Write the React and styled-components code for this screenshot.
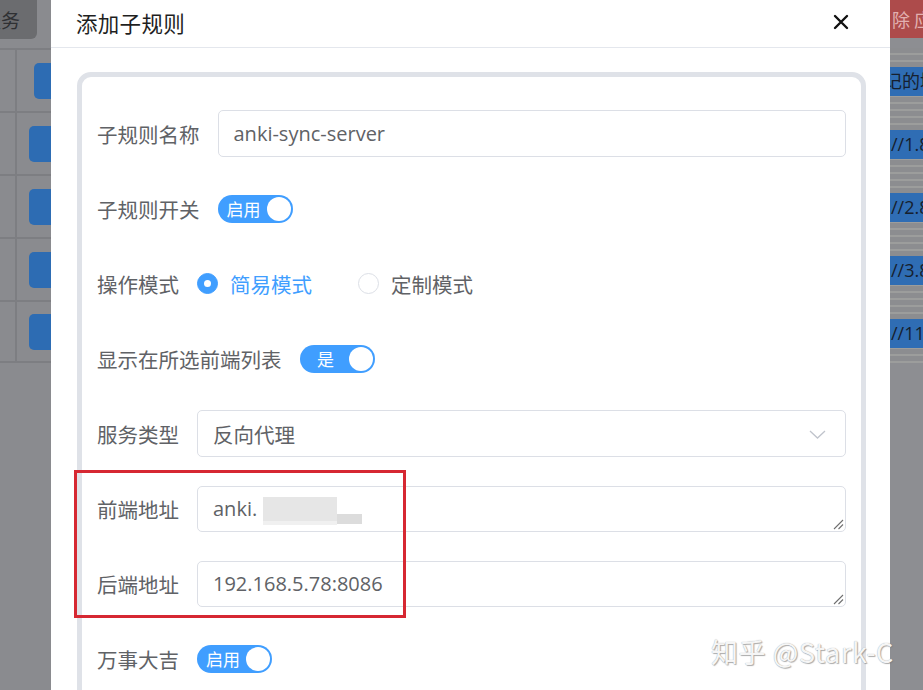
import React from "react";
import styled, { createGlobalStyle } from "styled-components";

const Global = createGlobalStyle`
  html, body { margin: 0; padding: 0; background: #8b8c90; }
  * { box-sizing: border-box; }
`;

const CJK = `"Noto Sans CJK SC", "Noto Sans", sans-serif`;
const LATIN = `"Open Sans", "Noto Sans CJK SC", sans-serif`;
const BLUE = "#409eff";

const Page = styled.div`
  position: relative;
  display: flex;
  width: 923px;
  height: 690px;
  overflow: hidden;
  font-family: ${CJK};
`;

/* ---------- dimmed background left ---------- */
const LeftBg = styled.div`
  width: 51px;
  flex-shrink: 0;
  background: #8a8b8f;
  display: flex;
  flex-direction: column;
  overflow: hidden;
`;
const DarkBtn = styled.div`
  width: 37px;
  height: 39px;
  flex-shrink: 0;
  background: #6b6c6f;
  border-radius: 0 0 6px 0;
  display: flex;
  align-items: center;
  justify-content: flex-end;
  padding-right: 17px;
  font-size: 19px;
  color: #2f3033;
  white-space: nowrap;
  margin-bottom: 9px;
`;
const BgRow = styled.div`
  display: flex;
  height: 63px;
  flex-shrink: 0;
  border-top: 2px solid #7d7e82;
  &:last-child { border-bottom: 2px solid #7d7e82; }
`;
const BgCell = styled.div`
  width: 17px;
  border-right: 2px solid #7d7e82;
`;
const BgBtnCell = styled.div`
  flex: 1;
  display: flex;
  align-items: center;
  padding-left: ${(p) => p.$pad}px;
`;
const BgBlueBtn = styled.div`
  flex: 1;
  height: 36px;
  background: #2d6cb3;
  border-radius: 5px 0 0 5px;
`;

/* ---------- dimmed background right ---------- */
const RightBg = styled.div`
  flex: 1;
  background: #8d8e92;
  display: flex;
  flex-direction: column;
  overflow: hidden;
`;
const RedBtn = styled.div`
  height: 38px;
  flex-shrink: 0;
  background: #ad4b4b;
  color: #e2b0b0;
  font-size: 18px;
  display: flex;
  align-items: center;
  padding-left: 2px;
  white-space: nowrap;
  margin-bottom: 10px;
`;
const StripeRow = styled.div`
  height: 63px;
  flex-shrink: 0;
  padding-top: 19px;
  background: repeating-linear-gradient(
    to bottom,
    #8c8d90 0px,
    #8c8d90 5px,
    #9c9d9c 5px,
    #9c9d9c 7px
  );
`;
const StripeBar = styled.div`
  height: 29px;
  background: #2f6db4;
  color: #16202e;
  font-family: ${LATIN};
  font-size: 18px;
  line-height: 29px;
  white-space: nowrap;
  text-indent: ${(p) => p.$indent || 1}px;
`;

/* ---------- dialog ---------- */
const Dialog = styled.div`
  width: 839px;
  flex-shrink: 0;
  background: #fff;
  display: flex;
  flex-direction: column;
  overflow: hidden;
`;
const Header = styled.div`
  height: 48px;
  flex-shrink: 0;
  border-bottom: 1px solid #e4e7ed;
  display: flex;
  align-items: center;
  justify-content: space-between;
  padding: 0 41px 3px 25px;
`;
const Title = styled.div`
  font-size: 21.5px;
  color: #1f1f1f;
  letter-spacing: 0.3px;
`;
const CloseBtn = styled.div`
  width: 16px;
  height: 16px;
  display: flex;
`;
const Body = styled.div`
  flex-shrink: 0;
  padding: 24px 24px 0 26px;
`;
const Card = styled.div`
  border: 5px solid #dfe2e8;
  border-radius: 14px;
  padding: 33px 15px 40px 15px;
  display: flex;
  flex-direction: column;
  gap: 28px;
  min-height: 700px;
`;
const Row = styled.div`
  display: flex;
  align-items: center;
  height: ${(p) => p.$h || 47}px;
`;
const Label = styled.div`
  font-size: 20.5px;
  color: #606266;
  margin-right: 18px;
  white-space: nowrap;
  flex-shrink: 0;
`;
const Field = styled.div`
  position: relative;
  flex: 1;
  height: ${(p) => p.$h || 47}px;
  border: 1px solid #dcdfe6;
  border-radius: 5px;
  padding: 0 15px;
  display: flex;
  align-items: center;
  font-family: ${(p) => (p.$cjk ? CJK : LATIN)};
  font-size: ${(p) => (p.$cjk ? "20.5px" : "20px")};
  color: #606266;
  white-space: nowrap;
`;
const Chevron = styled.svg`
  position: absolute;
  right: 19px;
  top: 19px;
`;
const Resize = styled.svg`
  position: absolute;
  right: 1px;
  bottom: 1px;
`;
const Blur = styled.span`
  display: inline-block;
  position: relative;
  width: 99px;
  height: 28px;
  margin-left: 6px;
  margin-top: 4px;
  &::before {
    content: "";
    position: absolute;
    left: 0;
    top: 0;
    width: 74px;
    height: 24px;
    background: #e6e6e6;
    box-shadow: 0 4px 0 #f0f0f0;
  }
  &::after {
    content: "";
    position: absolute;
    left: 74px;
    top: 17px;
    width: 25px;
    height: 10px;
    background: #dcdcdc;
  }
`;

const Switch = styled.div`
  position: relative;
  width: 75px;
  height: 28px;
  border-radius: 14px;
  background: ${BLUE};
  display: flex;
  align-items: center;
  &::after {
    content: "";
    position: absolute;
    right: 2px;
    top: 2px;
    width: 24px;
    height: 24px;
    border-radius: 50%;
    background: #fff;
  }
`;
const SwitchText = styled.span`
  width: 52px;
  text-align: center;
  font-size: 17px;
  color: #fff;
`;

const RadioGroup = styled.div`
  display: flex;
  align-items: center;
  gap: 46px;
`;
const RadioItem = styled.div`
  display: flex;
  align-items: center;
  gap: 12px;
  font-size: 20.5px;
  color: ${(p) => (p.$on ? BLUE : "#606266")};
`;
const RadioDot = styled.span`
  position: relative;
  width: 21px;
  height: 21px;
  border-radius: 50%;
  background: ${(p) => (p.$on ? BLUE : "#fff")};
  border: 1px solid ${(p) => (p.$on ? BLUE : "#dcdfe6")};
  &::after {
    content: "";
    display: ${(p) => (p.$on ? "block" : "none")};
    position: absolute;
    left: 6px;
    top: 6px;
    width: 7px;
    height: 7px;
    border-radius: 50%;
    background: #fff;
  }
`;

/* ---------- overlays ---------- */
const Annotation = styled.div`
  position: absolute;
  left: 74px;
  top: 470px;
  width: 332px;
  height: 148px;
  border: 3px solid #d62832;
  pointer-events: none;
`;
const Watermark = styled.div`
  position: absolute;
  left: 711px;
  top: 632px;
  font-family: ${CJK};
  font-size: 27px;
  color: rgba(255, 255, 255, 0.92);
  text-shadow: 0 0 1px #9a9a9a, 1px 1px 1px rgba(120, 120, 120, 0.6);
  letter-spacing: 0.6px;
  white-space: nowrap;
  pointer-events: none;
`;

const SwitchOn = ({ text }) => (
  <Switch>
    <SwitchText>{text}</SwitchText>
  </Switch>
);

const ResizeHandle = () => (
  <Resize width="13" height="13" viewBox="0 0 13 13">
    <line x1="12" y1="3" x2="3" y2="12" stroke="#6f6f6f" strokeWidth="1.1" />
    <line x1="12" y1="7.5" x2="7.5" y2="12" stroke="#6f6f6f" strokeWidth="1.1" />
  </Resize>
);

export default function App() {
  return (
    <>
      <Global />
      <Page>
        <LeftBg>
          <DarkBtn>服务</DarkBtn>
          {[17, 12, 12, 12, 12].map((pad, i) => (
            <BgRow key={i}>
              <BgCell />
              <BgBtnCell $pad={pad}>
                <BgBlueBtn />
              </BgBtnCell>
            </BgRow>
          ))}
        </LeftBg>

        <Dialog>
          <Header>
            <Title>添加子规则</Title>
            <CloseBtn>
              <svg width="16" height="16" viewBox="0 0 16 16">
                <path d="M2 2 L14 14 M14 2 L2 14" stroke="#111" strokeWidth="2.4" strokeLinecap="round" />
              </svg>
            </CloseBtn>
          </Header>
          <Body>
            <Card>
              <Row>
                <Label>子规则名称</Label>
                <Field>anki-sync-server</Field>
              </Row>
              <Row>
                <Label>子规则开关</Label>
                <SwitchOn text="启用" />
              </Row>
              <Row>
                <Label>操作模式</Label>
                <RadioGroup>
                  <RadioItem $on>
                    <RadioDot $on />
                    简易模式
                  </RadioItem>
                  <RadioItem>
                    <RadioDot />
                    定制模式
                  </RadioItem>
                </RadioGroup>
              </Row>
              <Row>
                <Label>显示在所选前端列表</Label>
                <SwitchOn text="是" />
              </Row>
              <Row>
                <Label>服务类型</Label>
                <Field $cjk>
                  反向代理
                  <Chevron width="17" height="9" viewBox="0 0 17 9">
                    <polyline points="1,1 8.5,8 16,1" fill="none" stroke="#c0c4cc" strokeWidth="1.3" />
                  </Chevron>
                </Field>
              </Row>
              <Row>
                <Label>前端地址</Label>
                <Field $h={46}>
                  anki.
                  <Blur />
                  <ResizeHandle />
                </Field>
              </Row>
              <Row>
                <Label>后端地址</Label>
                <Field $h={46}>
                  192.168.5.78:8086
                  <ResizeHandle />
                </Field>
              </Row>
              <Row>
                <Label>万事大吉</Label>
                <SwitchOn text="启用" />
              </Row>
            </Card>
          </Body>
        </Dialog>

        <RightBg>
          <RedBtn>除 应</RedBtn>
          <StripeRow>
            <StripeBar $indent={-6}>记的域</StripeBar>
          </StripeRow>
          <StripeRow>
            <StripeBar>//1.8</StripeBar>
          </StripeRow>
          <StripeRow>
            <StripeBar>//2.8</StripeBar>
          </StripeRow>
          <StripeRow>
            <StripeBar>//3.8</StripeBar>
          </StripeRow>
          <StripeRow>
            <StripeBar>//11</StripeBar>
          </StripeRow>
        </RightBg>

        <Annotation />
        <Watermark>知乎 @Stark-C</Watermark>
      </Page>
    </>
  );
}
